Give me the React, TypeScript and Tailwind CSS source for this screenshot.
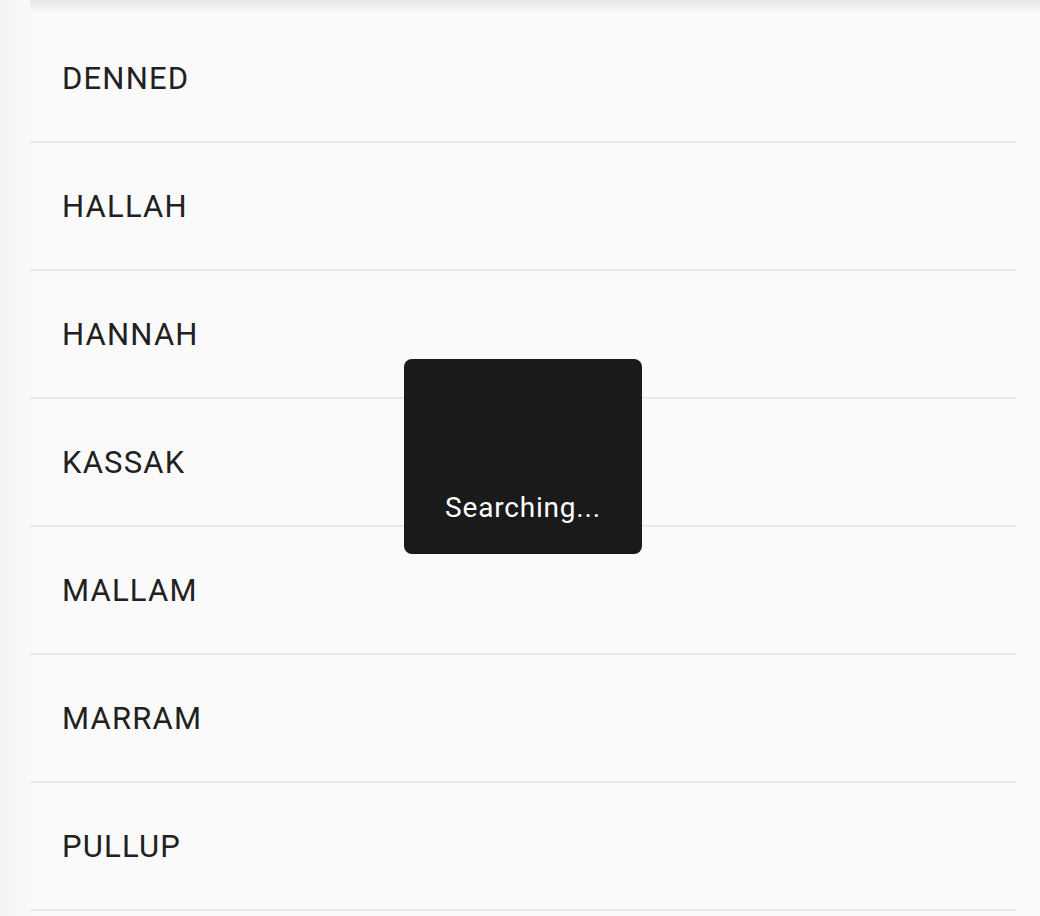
import React from 'react';

const names = ['DENNED', 'HALLAH', 'HANNAH', 'KASSAK', 'MALLAM', 'MARRAM', 'PULLUP'];

const App: React.FC = () => {
    return (
        <div className="relative h-[916px] w-full overflow-hidden bg-[#fafafa]" style={{ fontFamily: 'Roboto, "Noto Sans", sans-serif' }}>
            {/* app bar shadow + drawer edge */}
            <div className="absolute inset-x-0 top-0 h-[14px] bg-gradient-to-b from-[#e6e6e6] to-[#fafafa]" />
            <div className="absolute inset-y-0 left-0 w-[30px] bg-gradient-to-r from-[#f3f3f3] to-[#f9f9f9]" />

            {/* Word list */}
            <div className="relative pl-[30px] pr-[24px] pt-[15px]">
                {names.map((n) => (
                    <div key={n} className="flex h-[128px] items-center border-b-2 border-[#e8e8e8] pl-[32px] pt-[1px]">
                        <span className="text-[31px] leading-none tracking-[1.2px] text-[#212121]">{n}</span>
                    </div>
                ))}
            </div>

            {/* Searching overlay */}
            <div className="absolute inset-0 flex items-center justify-center">
                <div className="mb-[3px] ml-[6px] flex h-[195px] w-[238px] flex-col items-center justify-end rounded-[8px] bg-[#1a1a1a] pb-[32px]">
                    <span className="text-[28px] leading-none tracking-[0.8px] text-white">Searching...</span>
                </div>
            </div>
        </div>
    );
};

export default App;
